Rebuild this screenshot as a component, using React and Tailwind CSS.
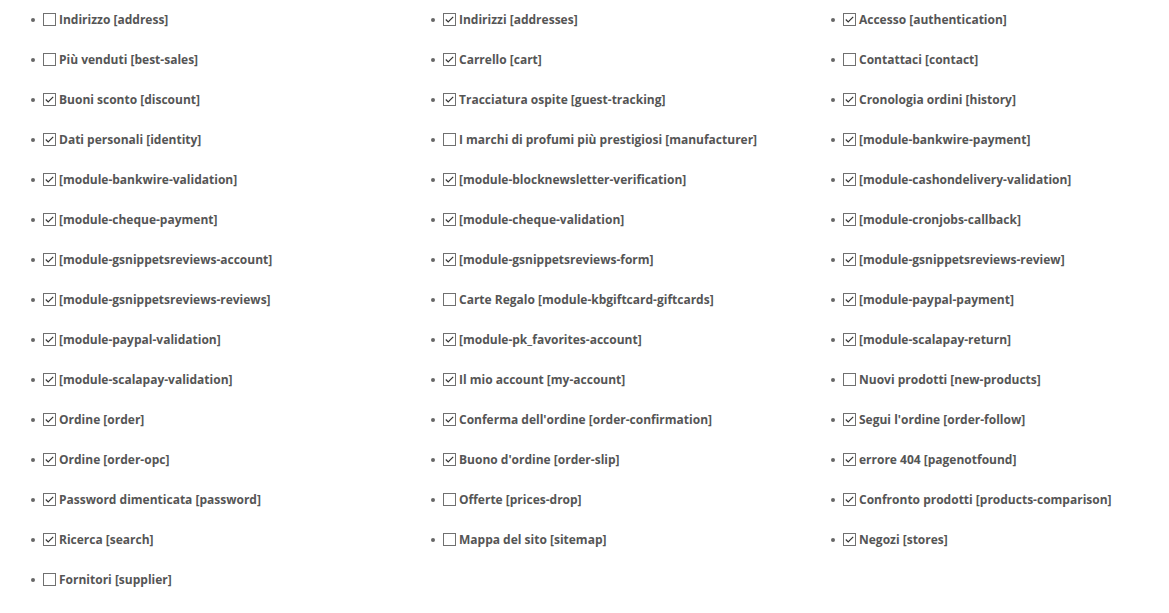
import React from "react";

const pages = [
  ["Indirizzo [address]", false],
  ["Indirizzi [addresses]", true],
  ["Accesso [authentication]", true],
  ["Più venduti [best-sales]", false],
  ["Carrello [cart]", true],
  ["Contattaci [contact]", false],
  ["Buoni sconto [discount]", true],
  ["Tracciatura ospite [guest-tracking]", true],
  ["Cronologia ordini [history]", true],
  ["Dati personali [identity]", true],
  ["I marchi di profumi più prestigiosi [manufacturer]", false],
  ["[module-bankwire-payment]", true],
  ["[module-bankwire-validation]", true],
  ["[module-blocknewsletter-verification]", true],
  ["[module-cashondelivery-validation]", true],
  ["[module-cheque-payment]", true],
  ["[module-cheque-validation]", true],
  ["[module-cronjobs-callback]", true],
  ["[module-gsnippetsreviews-account]", true],
  ["[module-gsnippetsreviews-form]", true],
  ["[module-gsnippetsreviews-review]", true],
  ["[module-gsnippetsreviews-reviews]", true],
  ["Carte Regalo [module-kbgiftcard-giftcards]", false],
  ["[module-paypal-payment]", true],
  ["[module-paypal-validation]", true],
  ["[module-pk_favorites-account]", true],
  ["[module-scalapay-return]", true],
  ["[module-scalapay-validation]", true],
  ["Il mio account [my-account]", true],
  ["Nuovi prodotti [new-products]", false],
  ["Ordine [order]", true],
  ["Conferma dell'ordine [order-confirmation]", true],
  ["Segui l'ordine [order-follow]", true],
  ["Ordine [order-opc]", true],
  ["Buono d'ordine [order-slip]", true],
  ["errore 404 [pagenotfound]", true],
  ["Password dimenticata [password]", true],
  ["Offerte [prices-drop]", false],
  ["Confronto prodotti [products-comparison]", true],
  ["Ricerca [search]", true],
  ["Mappa del sito [sitemap]", false],
  ["Negozi [stores]", true],
  ["Fornitori [supplier]", false],
];

function Box({ checked }) {
  return (
    <svg width="13" height="13" viewBox="0 0 13 13" className="shrink-0 mb-[2px]">
      <rect x="0.5" y="0.5" width="12" height="12" fill="#fff" stroke="#707070" />
      {checked && (
        <path d="M2.8 6.5 L5.2 9 L10.2 3.8" fill="none" stroke="#333" strokeWidth="1.2" />
      )}
    </svg>
  );
}

export default function App() {
  return (
    <div className="bg-white min-h-screen" style={{ fontFamily: "'Open Sans', sans-serif" }}>
      <ul className="grid grid-cols-[400px_400px_400px] w-[1200px]">
        {pages.map(([label, checked]) => (
          <li key={label} className="h-10 flex items-center pl-[31px]">
            <span className="w-[4px] h-[4px] rounded-full bg-[#666] mr-[8px] shrink-0" />
            <label className="flex items-center gap-[3px] text-[12px] font-bold text-[#555] whitespace-nowrap">
              <Box checked={checked} />
              <span>{label}</span>
            </label>
          </li>
        ))}
      </ul>
    </div>
  );
}
